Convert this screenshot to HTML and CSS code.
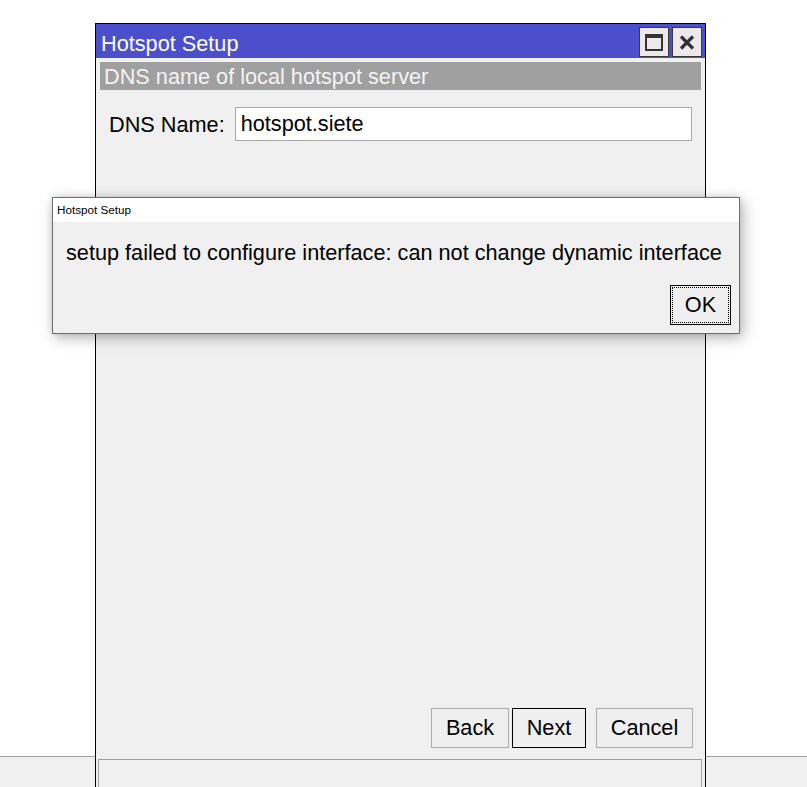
FILE: index.html
```html
<!DOCTYPE html>
<html>
<head>
<meta charset="utf-8">
<link rel="stylesheet" href="styles.css">
</head>
<body>
<div class="desktop">
  <div class="desk-fill"></div>
  <div class="taskband"></div>

  <div class="window">
    <div class="titlebar">
      <span class="title">Hotspot Setup</span>
      <div class="tb-buttons">
        <div class="tb-btn">
          <svg width="18" height="17" viewBox="0 0 18 17"><rect x="1" y="1" width="16" height="15" fill="none" stroke="#333" stroke-width="2"/><rect x="0" y="0" width="18" height="4" fill="#333"/></svg>
        </div>
        <div class="tb-btn">
          <svg width="16" height="15" viewBox="0 0 16 15"><path d="M2 1.5 L14 13.5 M14 1.5 L2 13.5" stroke="#333" stroke-width="3.2" fill="none"/></svg>
        </div>
      </div>
    </div>
    <div class="header">DNS name of local hotspot server</div>
    <div class="field-row">
      <span class="label">DNS Name:</span>
      <div class="input">hotspot.siete</div>
    </div>
    <div class="spacer"></div>
    <div class="actions">
      <div class="btn btn-back">Back</div>
      <div class="btn btn-next">Next</div>
      <div class="btn btn-cancel">Cancel</div>
    </div>
    <div class="status"></div>
  </div>

  <div class="dialog">
    <div class="dlg-title">Hotspot Setup</div>
    <div class="dlg-msg">setup failed to configure interface: can not change dynamic interface</div>
    <div class="dlg-actions">
      <div class="ok-btn"><span class="ok-focus">OK</span></div>
    </div>
  </div>
</div>
</body>
</html>
```

FILE: styles.css
```css
html, body {
  margin: 0;
  padding: 0;
  background: #ffffff;
  overflow: hidden;
}

.desktop {
  position: relative;
  width: 807px;
  height: 787px;
  display: flex;
  flex-direction: column;
  font-family: "Liberation Sans", Arial, sans-serif;
  font-size: 21.7px;
  color: #000;
}

.desk-fill {
  height: 756px;
  background: #ffffff;
}

.taskband {
  flex: 1;
  border-top: 1px solid #a0a0a0;
  background: #f0f0f0;
}

.window {
  position: absolute;
  left: 95px;
  top: 23px;
  width: 611px;
  height: 780px;
  box-sizing: border-box;
  border: 1px solid #000;
  background: #f0f0f0;
  display: flex;
  flex-direction: column;
  overflow: hidden;
}

.titlebar {
  height: 34px;
  flex: none;
  background: #4c4fcb;
  display: flex;
  align-items: flex-start;
  padding-left: 5px;
}

.title {
  color: #ffffff;
  line-height: 30px;
  margin-top: 5px;
}

.tb-buttons {
  margin-left: auto;
  margin-top: 3px;
  margin-right: 3px;
  display: flex;
  gap: 3px;
}

.tb-btn {
  width: 30px;
  height: 30px;
  box-sizing: border-box;
  border: 1px solid #3a3a3a;
  background: #ece8ec;
  display: flex;
  align-items: center;
  justify-content: center;
}

.header {
  flex: none;
  margin: 4px 4px 0 4px;
  height: 28px;
  box-sizing: border-box;
  padding: 2px 0 0 4px;
  line-height: 26px;
  background: #a0a0a0;
  color: #f4f4f4;
  white-space: nowrap;
}

.field-row {
  flex: none;
  margin-top: 17px;
  display: flex;
  align-items: center;
  padding-left: 13px;
  gap: 10px;
}

.label {
  line-height: 25px;
}

.input {
  width: 457px;
  height: 34px;
  box-sizing: border-box;
  border: 1px solid #a8a8a8;
  background: #ffffff;
  padding-left: 5px;
  line-height: 32px;
}

.spacer {
  flex: 1;
}

.actions {
  flex: none;
  display: flex;
  justify-content: flex-end;
  padding-right: 12px;
}

.btn {
  height: 40px;
  box-sizing: border-box;
  border: 1px solid #adadad;
  background: #efefef;
  display: flex;
  align-items: center;
  justify-content: center;
}

.btn-back { width: 78px; }
.btn-next { width: 74px; margin-left: 3px; border-color: #000; }
.btn-cancel { width: 97px; margin-left: 10px; }

.status {
  flex: none;
  height: 43px;
  margin: 11px 3px 0 2px;
  box-sizing: border-box;
  border: 1px solid #a0a0a0;
  border-bottom: none;
  background: #f0f0f0;
}

.dialog {
  position: absolute;
  left: 52px;
  top: 197px;
  width: 688px;
  height: 137px;
  box-sizing: border-box;
  border: 1px solid #6e6e6e;
  background: #f0f0f0;
  box-shadow: 3px 4px 14px rgba(0, 0, 0, 0.28), 0 0 6px rgba(0, 0, 0, 0.12);
  display: flex;
  flex-direction: column;
}

.dlg-title {
  height: 24px;
  flex: none;
  background: #ffffff;
  font-size: 11.7px;
  line-height: 24px;
  padding-left: 4px;
}

.dlg-msg {
  margin-top: 18px;
  line-height: 26px;
  padding-left: 13px;
  white-space: nowrap;
}

.dlg-actions {
  margin-top: 19px;
  display: flex;
  justify-content: flex-end;
  padding-right: 8px;
}

.ok-btn {
  width: 61px;
  height: 40px;
  box-sizing: border-box;
  border: 1px solid #000;
  padding: 1px;
  background: #efefef;
  display: flex;
}

.ok-focus {
  flex: 1;
  border: 1px dotted #000;
  display: flex;
  align-items: center;
  justify-content: center;
}
```
